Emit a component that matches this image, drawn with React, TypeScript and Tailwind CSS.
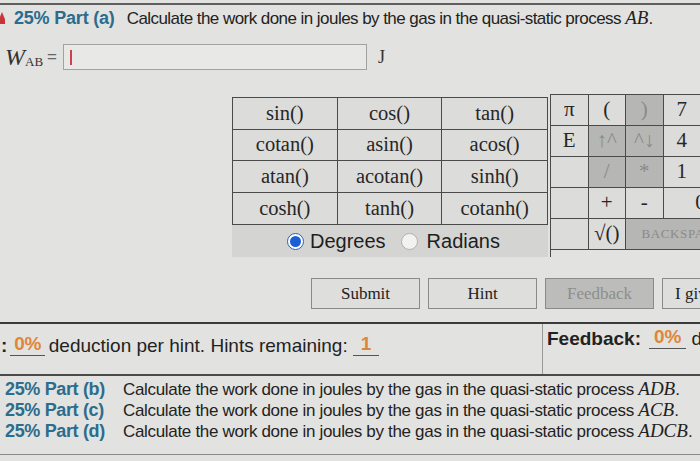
import { useState } from "react";

const sans = "font-['Liberation_Sans','DejaVu_Sans',sans-serif]";
const serif = "font-['Liberation_Serif','DejaVu_Serif',serif]";

const funcs = [
  ["sin()", "cos()", "tan()"],
  ["cotan()", "asin()", "acos()"],
  ["atan()", "acotan()", "sinh()"],
  ["cosh()", "tanh()", "cotanh()"],
];

// keypad: label, dark = disabled look, span = columns
const keys: { t: string; dark?: boolean; span?: number; small?: boolean }[][] = [
  [{ t: "π" }, { t: "(" }, { t: ")", dark: true }, { t: "7" }, { t: "" }],
  [{ t: "E" }, { t: "↑^", dark: true }, { t: "^↓", dark: true }, { t: "4" }, { t: "" }],
  [{ t: "" }, { t: "/", dark: true }, { t: "*", dark: true }, { t: "1" }, { t: "" }],
  [{ t: "" }, { t: "+" }, { t: "-" }, { t: "0", span: 2 }],
  [{ t: "" }, { t: "√()" }, { t: "BACKSPACE", dark: true, span: 3, small: true }],
];

function Part({ letter, proc }: { letter: string; proc: string }) {
  return (
    <div className="flex items-center h-[21px] whitespace-nowrap">
      <span className="w-[123px] shrink-0 pl-[5px] font-bold text-[#2c6c8c] text-[18px] tracking-[-0.35px]">
        25% Part ({letter})
      </span>
      <span className="text-[17px] text-[#222] tracking-[-0.32px]">
        Calculate the work done in joules by the gas in the quasi-static process{" "}
        <i className={`${serif} text-[19px] tracking-normal`}>{proc}</i>.
      </span>
    </div>
  );
}

function Radio({ on, onClick }: { on: boolean; onClick: () => void }) {
  return (
    <button
      onClick={onClick}
      className={`w-[17px] h-[17px] shrink-0 rounded-full border flex items-center justify-center ${
        on ? "border-[#1a5fd6] bg-white" : "border-[#b0b0ae] bg-[#f2f2f0]"
      }`}
    >
      {on && <span className="w-[11px] h-[11px] rounded-full bg-[#1a5fd6]" />}
    </button>
  );
}

export default function App() {
  const [deg, setDeg] = useState(true);

  return (
    <div className={`w-[700px] h-[461px] overflow-hidden bg-[#e2e2e0] ${sans} text-[#222]`}>
      <div className="h-[3px]" />
      <div className="h-[2px] bg-[#5f5f5f]" />

      {/* part (a) header */}
      <div className="flex items-center h-[22px] mt-[2px] whitespace-nowrap">
        <svg width="8" height="14" viewBox="0 0 8 14" className="shrink-0 -ml-[3px]">
          <polygon points="0,13 5,1 10,13" fill="#c8343a" />
        </svg>
        <span className="ml-[9px] font-bold text-[#2c6c8c] text-[18px] tracking-[-0.2px]">25% Part (a)</span>
        <span className="ml-[12px] text-[17px] tracking-[-0.55px]">
          Calculate the work done in joules by the gas in the quasi-static process{" "}
          <i className={`${serif} text-[19px] tracking-normal`}>AB</i>.
        </span>
      </div>

      {/* answer row */}
      <div className="flex items-center h-[26px] mt-[15px]">
        <span className={`${serif} ml-[5px] text-[24px] italic text-[#333] leading-none`}>W</span>
        <span className={`${serif} text-[13px] text-[#333] mt-[9px]`}>AB</span>
        <span className="ml-[4px] text-[17px] text-[#666]">=</span>
        <div className="ml-[6px] w-[304px] h-[26px] shrink-0 border border-[#a2a2a0] bg-[#e8e8e6] flex items-center">
          <div className="ml-[6px] w-[1.5px] h-[15px] bg-[#d04050]" />
        </div>
        <span className={`${serif} ml-[11px] text-[18px] text-[#333]`}>J</span>
      </div>

      {/* calculator */}
      <div className="flex mt-[27px] ml-[232px]">
        <div className="w-[316px] shrink-0">
          <div className="grid grid-cols-3 border border-[#4a4a4a] bg-[#dcdcda]">
            {funcs.flat().map((f, i) => (
              <div
                key={i}
                className={`${serif} h-[31.5px] flex items-center justify-center text-[20.5px] text-[#262626] border-[#4a4a4a] ${
                  i % 3 !== 2 ? "border-r" : ""
                } ${i < 9 ? "border-b" : ""}`}
              >
                {f}
              </div>
            ))}
          </div>
          <div className="h-[32px] bg-[#d4d4d2] flex items-center text-[20px] text-[#1e1e1e]">
            <div className="ml-[55px]">
              <Radio on={deg} onClick={() => setDeg(true)} />
            </div>
            <span className="ml-[6px]">Degrees</span>
            <div className="ml-[15px]">
              <Radio on={!deg} onClick={() => setDeg(false)} />
            </div>
            <span className="ml-[9px]">Radians</span>
          </div>
        </div>

        <div className="ml-[2px] -mt-[3px] w-[190px] shrink-0 border-l border-t border-[#4a4a4a]">
          {keys.map((row, r) => (
            <div key={r} className="flex h-[31px]">
              {row.map((k, c) => {
                const w = k.span === 3 ? "w-[113px]" : k.span === 2 ? "w-[75px]" : "w-[37.5px]";
                return (
                  <div
                    key={c}
                    className={`${serif} ${w} shrink-0 flex items-center justify-center border-r border-b border-[#4a4a4a] ${
                      k.dark ? "bg-[#b6b6b4] text-[#8a8a88]" : "bg-[#dcdcda] text-[#262626]"
                    } ${k.small ? "text-[13px] tracking-[0.6px]" : "text-[21px]"}`}
                  >
                    {k.t}
                  </div>
                );
              })}
            </div>
          ))}
        </div>
      </div>

      {/* buttons */}
      <div className={`${serif} flex gap-[8px] ml-[311px] mt-[21px] text-[17px] whitespace-nowrap`}>
        <button className="w-[109px] h-[31px] shrink-0 border border-[#8a8a88] bg-[#dededc] text-[#222]">Submit</button>
        <button className="w-[109px] h-[31px] shrink-0 border border-[#8a8a88] bg-[#dededc] text-[#222]">Hint</button>
        <button className="w-[109px] h-[31px] shrink-0 border border-[#8a8a88] bg-[#bcbcba] text-[#8e8e8c]">Feedback</button>
        <button className="w-[109px] h-[31px] shrink-0 border border-[#8a8a88] bg-[#dededc] text-[#222] text-left pl-[12px]">
          I give up!
        </button>
      </div>

      {/* hints / feedback */}
      <div className="mt-[13px] h-[2px] bg-[#3a3a3a]" />
      <div className="flex h-[50px] text-[19px] whitespace-nowrap">
        <div className="w-[543px] shrink-0 border-r border-[#9a9a98] flex items-start pt-[8px]">
          <span className="ml-[1px] font-bold">:</span>
          <span className="ml-[3px] px-[4px] border-b border-[#555] font-bold text-[#e0863a] leading-[23px] tracking-[-0.5px]">0%</span>
          <span className="ml-[4px]">deduction per hint. Hints remaining:</span>
          <span className="ml-[5px] px-[8px] border-b border-[#555] font-bold text-[#e0863a] leading-[23px]">1</span>
        </div>
        <div className="flex items-start pt-[1px]">
          <span className="ml-[4px] font-bold">Feedback:</span>
          <span className="ml-[8px] px-[5px] border-b border-[#555] font-bold text-[#e0863a] leading-[23px]">0%</span>
          <span className="ml-[5px]">deduction per feedback.</span>
        </div>
      </div>
      <div className="h-[1.5px] bg-[#4a4a4a]" />

      {/* other parts */}
      <div className="pt-[3px]">
        <Part letter="b" proc="ADB" />
        <Part letter="c" proc="ACB" />
        <Part letter="d" proc="ADCB" />
      </div>
      <div className="mt-[12px] h-[1px] bg-[#8a8a88]" />
    </div>
  );
}
